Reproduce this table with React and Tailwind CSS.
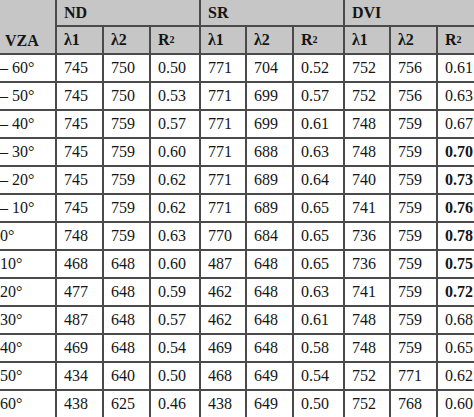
import React from "react";

const rows = [
  ["– 60°", "745", "750", "0.50", "771", "704", "0.52", "752", "756", "0.61", false],
  ["– 50°", "745", "750", "0.53", "771", "699", "0.57", "752", "756", "0.63", false],
  ["– 40°", "745", "759", "0.57", "771", "699", "0.61", "748", "759", "0.67", false],
  ["– 30°", "745", "759", "0.60", "771", "688", "0.63", "748", "759", "0.70", true],
  ["– 20°", "745", "759", "0.62", "771", "689", "0.64", "740", "759", "0.73", true],
  ["– 10°", "745", "759", "0.62", "771", "689", "0.65", "741", "759", "0.76", true],
  ["0°", "748", "759", "0.63", "770", "684", "0.65", "736", "759", "0.78", true],
  ["10°", "468", "648", "0.60", "487", "648", "0.65", "736", "759", "0.75", true],
  ["20°", "477", "648", "0.59", "462", "648", "0.63", "741", "759", "0.72", true],
  ["30°", "487", "648", "0.57", "462", "648", "0.61", "748", "759", "0.68", false],
  ["40°", "469", "648", "0.54", "469", "648", "0.58", "748", "759", "0.65", false],
  ["50°", "434", "640", "0.50", "468", "649", "0.54", "752", "771", "0.62", false],
  ["60°", "438", "625", "0.46", "438", "649", "0.50", "752", "768", "0.60", false],
];

const cell = "h-[28px] flex items-center border-b-2 border-r-2 border-[#4a4a4a] pl-[7px] whitespace-nowrap overflow-hidden";

function R2() {
  return (
    <span>
      R<sup className="text-[10px] relative -top-[2px]">2</sup>
    </span>
  );
}

export default function App() {
  return (
    <div
      className="w-[474px] h-[417px] overflow-hidden bg-white text-[#151515] text-[16px]"
      style={{ fontFamily: '"Liberation Serif", "Times New Roman", serif' }}
    >
      <div className="grid grid-cols-[57px_47px_47px_50px_46px_47px_51px_46px_47px_60px] w-[498px]">
        <div className="row-span-2 h-[55px] flex items-end pb-0 pl-[5px] bg-[#c6c6c6] border-b-2 border-r-2 border-[#4a4a4a] font-bold">
          VZA
        </div>
        <div className="col-span-3 h-[27px] flex items-center pl-[7px] bg-[#c6c6c6] border-b-2 border-r-2 border-[#4a4a4a] font-bold">
          ND
        </div>
        <div className="col-span-3 h-[27px] flex items-center pl-[7px] bg-[#c6c6c6] border-b-2 border-r-2 border-[#4a4a4a] font-bold">
          SR
        </div>
        <div className="col-span-3 h-[27px] flex items-center pl-[7px] bg-[#c6c6c6] border-b-2 border-[#4a4a4a] font-bold">
          DVI
        </div>
        {[0, 1, 2].map((g) => (
          <React.Fragment key={g}>
            <div className={`${cell} bg-[#c6c6c6] font-bold`}>λ1</div>
            <div className={`${cell} bg-[#c6c6c6] font-bold`}>λ2</div>
            <div className={`${cell} bg-[#c6c6c6] font-bold`}>
              <R2 />
            </div>
          </React.Fragment>
        ))}
        {rows.map((r, i) => (
          <React.Fragment key={i}>
            <div className={`${cell} !pl-0`}>
              <span>{r[0]}</span>
            </div>
            {r.slice(1, 10).map((v, j) => (
              <div key={j} className={`${cell} ${j === 8 && r[10] ? "font-bold" : ""}`}>
                {v}
              </div>
            ))}
          </React.Fragment>
        ))}
      </div>
    </div>
  );
}
